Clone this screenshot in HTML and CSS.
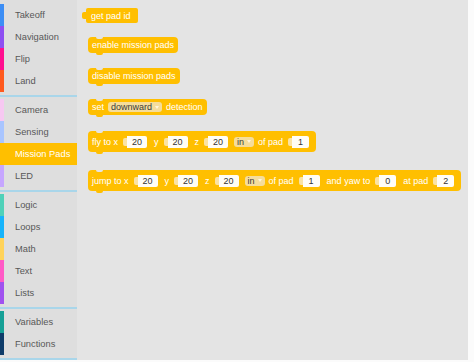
FILE: index.html
```html
<!DOCTYPE html>
<html>
<head>
<meta charset="utf-8">
<link rel="stylesheet" href="styles.css">
</head>
<body>
<div class="app">
  <nav class="sidebar">
    <div class="group first">
      <div class="item"><span class="strip c-takeoff"></span><span class="label">Takeoff</span></div>
      <div class="item"><span class="strip c-nav"></span><span class="label">Navigation</span></div>
      <div class="item"><span class="strip c-flip"></span><span class="label">Flip</span></div>
      <div class="item"><span class="strip c-land"></span><span class="label">Land</span></div>
    </div>
    <div class="group">
      <div class="item"><span class="strip c-camera"></span><span class="label">Camera</span></div>
      <div class="item"><span class="strip c-sensing"></span><span class="label">Sensing</span></div>
      <div class="item active"><span class="strip c-mission"></span><span class="label">Mission Pads</span></div>
      <div class="item"><span class="strip c-led"></span><span class="label">LED</span></div>
    </div>
    <div class="group">
      <div class="item"><span class="strip c-logic"></span><span class="label">Logic</span></div>
      <div class="item"><span class="strip c-loops"></span><span class="label">Loops</span></div>
      <div class="item"><span class="strip c-math"></span><span class="label">Math</span></div>
      <div class="item"><span class="strip c-text"></span><span class="label">Text</span></div>
      <div class="item"><span class="strip c-lists"></span><span class="label">Lists</span></div>
    </div>
    <div class="group">
      <div class="item"><span class="strip c-vars"></span><span class="label">Variables</span></div>
      <div class="item"><span class="strip c-funcs"></span><span class="label">Functions</span></div>
    </div>
  </nav>
  <main class="workspace">
    <div class="block reporter b1"><span>get pad id</span></div>
    <div class="block stmt small b2"><span>enable mission pads</span></div>
    <div class="block stmt small b3"><span>disable mission pads</span></div>
    <div class="block stmt small b4">
      <span>set</span>
      <span class="dd">downward<span class="arr"></span></span>
      <span>detection</span>
    </div>
    <div class="block stmt tall b5">
      <span>fly to x</span>
      <span class="inp"><span class="tab"></span><span class="box">20</span></span>
      <span>y</span>
      <span class="inp"><span class="tab"></span><span class="box">20</span></span>
      <span>z</span>
      <span class="inp"><span class="tab"></span><span class="box">20</span></span>
      <span class="dd near">in<span class="arr"></span></span>
      <span>of pad</span>
      <span class="inp"><span class="tab"></span><span class="box">1</span></span>
    </div>
    <div class="block stmt tall b6">
      <span>jump to x</span>
      <span class="inp"><span class="tab"></span><span class="box">20</span></span>
      <span>y</span>
      <span class="inp"><span class="tab"></span><span class="box">20</span></span>
      <span>z</span>
      <span class="inp"><span class="tab"></span><span class="box">20</span></span>
      <span class="dd near">in<span class="arr"></span></span>
      <span>of pad</span>
      <span class="inp"><span class="tab"></span><span class="box">1</span></span>
      <span>and yaw to</span>
      <span class="inp"><span class="tab"></span><span class="box">0</span></span>
      <span>at pad</span>
      <span class="inp"><span class="tab"></span><span class="box">2</span></span>
    </div>
  </main>
</div>
</body>
</html>
```

FILE: styles.css
```css
* { box-sizing: border-box; }

body {
  margin: 0;
  background: #fbfbfb;
  font-family: "Liberation Sans", Arial, sans-serif;
}

.app {
  display: flex;
  width: 468px;
  height: 360px;
}

/* ---------- sidebar ---------- */
.sidebar {
  width: 77px;
  flex: none;
  background: #dedede;
}

.group {
  padding: 2px 0 3px;
  border-bottom: 2px solid #a9d6ea;
}

.group.first { padding-top: 4px; }

.item {
  display: flex;
  height: 22px;
}

.strip {
  width: 4px;
  flex: none;
}

.label {
  display: flex;
  align-items: center;
  padding-left: 11px;
  font-size: 9.3px;
  color: #585858;
}

.item.active { background: #ffbf00; }
.item.active .label { color: #fff; }

.c-takeoff { background: #3d8ef5; }
.c-nav { background: #8d4ff2; }
.c-flip { background: #ff0f8f; }
.c-land { background: #ff5a1f; }
.c-camera { background: #f7c8f2; }
.c-sensing { background: #a9c5ff; }
.c-mission { background: #ffbf00; }
.c-led { background: #c6a6ff; }
.c-logic { background: #4fd1b9; }
.c-loops { background: #17b4fb; }
.c-math { background: #ffd35a; }
.c-text { background: #ff5ac6; }
.c-lists { background: #a052ef; }
.c-vars { background: #16a096; }
.c-funcs { background: #0e3c6a; }

/* ---------- workspace ---------- */
.workspace {
  flex: 1;
  background: #e4e4e4;
  display: flex;
  flex-direction: column;
  align-items: flex-start;
  padding-left: 11px;
}

.block {
  position: relative;
  display: flex;
  align-items: center;
  gap: 4px;
  background: #ffbf00;
  color: #fff;
  font-size: 9px;
  white-space: nowrap;
  border-radius: 4px;
  padding: 0 4px 0 4px;
}

.small { height: 16px; }
.tall { height: 21px; }

.stmt::before {
  content: "";
  position: absolute;
  top: 0;
  left: 8px;
  width: 7px;
  height: 2px;
  background: #e4e4e4;
  border-radius: 0 0 3px 3px;
}

.stmt::after {
  content: "";
  position: absolute;
  bottom: -2px;
  left: 8px;
  width: 7px;
  height: 2px;
  background: #ffbf00;
  border-radius: 0 0 3px 3px;
}

.reporter {
  height: 15px;
  border-radius: 2px;
  padding: 0 7px 0 5px;
}

.reporter::before {
  content: "";
  position: absolute;
  left: -4px;
  top: 4px;
  width: 4px;
  height: 7px;
  background: #ffbf00;
  border-radius: 2px 0 0 2px;
}

.b1 { margin-left: -2px; margin-top: 8px; }
.b2 { margin-top: 14px; }
.b3 { margin-top: 15px; }
.b4 { margin-top: 15px; }
.b5 { margin-top: 16px; padding-right: 4px; }
.b6 { margin-top: 18px; padding-right: 4px; }

.dd {
  display: flex;
  align-items: center;
  gap: 3px;
  height: 10px;
  padding: 0 3px;
  background: #f5dd9c;
  color: #3a3a3a;
  border-radius: 3px;
}

.dd.near { margin-left: -1px; }

.arr {
  width: 0;
  height: 0;
  border-left: 2.5px solid transparent;
  border-right: 2.5px solid transparent;
  border-top: 3px solid #fff6dc;
}

.inp {
  display: flex;
  align-items: center;
  margin: 0 3px 0 1px;
}

.tab {
  width: 4px;
  height: 8px;
  background: #fbe3a3;
  border-radius: 2px 0 0 2px;
}

.box {
  display: flex;
  align-items: center;
  justify-content: center;
  height: 12px;
  min-width: 17px;
  padding: 0 5px;
  background: #fffdf6;
  color: #333;
  border-radius: 0 2px 2px 0;
}
```
